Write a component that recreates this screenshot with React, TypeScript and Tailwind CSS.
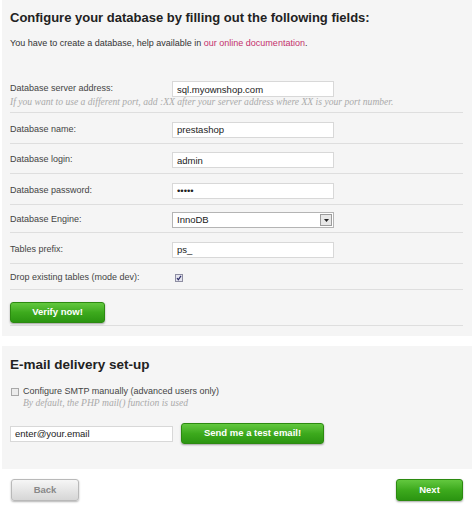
import React from 'react';

const sans = { fontFamily: '"Liberation Sans", Arial, sans-serif' };
const serif = { fontFamily: '"Liberation Serif", Georgia, serif' };

function Row({ label, h, children }: { label: string; h: string; children: React.ReactNode }) {
  return (
    <div className={`flex items-center border-b border-[#dedede] pt-[3px] ${h}`}>
      <label className="w-[162px] text-[9px] text-[#444]">{label}</label>
      {children}
    </div>
  );
}

function TextInput({ value, type = 'text' }: { value: string; type?: string }) {
  return (
    <input
      type={type}
      defaultValue={value}
      className="w-[162px] h-[16px] border border-[#d8d8d8] bg-white px-[4px] text-[9.5px] text-[#222] outline-none"
    />
  );
}

function GreenButton({ children, className }: { children: React.ReactNode; className?: string }) {
  return (
    <button
      className={`h-[21px] rounded-[3px] border border-[#2c8a10] bg-gradient-to-b from-[#62c83e] via-[#3daa1d] to-[#2b9511] text-[9.5px] font-bold text-white shadow-[0_1px_2px_rgba(0,0,0,0.35)] ${className ?? ''}`}
    >
      {children}
    </button>
  );
}

export default function App() {
  return (
    <div className="w-[474px] h-[506px] bg-white text-[#333]" style={sans}>
      <div className="mx-[2px] h-[336px] bg-[#f5f5f5] px-[8px] pt-[10px]">
        <h2 className="text-[13px] font-bold text-[#222] leading-[15px]">
          Configure your database by filling out the following fields:
        </h2>
        <p className="mt-[13px] text-[9px] leading-[11px] text-[#333]">
          You have to create a database, help available in{' '}
          <a className="text-[#c4306c]">our online documentation</a>.
        </p>

        <div className="mt-[32px] w-[453px]">
          <div className="border-b border-[#dedede] pb-[5px]">
            <div className="flex items-center h-[16px]">
              <label className="w-[162px] text-[9px] text-[#444]">Database server address:</label>
              <TextInput value="sql.myownshop.com" />
            </div>
            <p className="text-[9.6px] italic text-[#aaa] leading-[10px]" style={serif}>
              If you want to use a different port, add :XX after your server address where XX is your port number.
            </p>
          </div>
          <Row label="Database name:" h="h-[31px]">
            <TextInput value="prestashop" />
          </Row>
          <Row label="Database login:" h="h-[30px]">
            <TextInput value="admin" />
          </Row>
          <Row label="Database password:" h="h-[31px]">
            <TextInput value="admin" type="password" />
          </Row>
          <Row label="Database Engine:" h="h-[28px]">
            <div className="relative w-[162px] h-[16px] border border-[#b4b4b4] bg-white flex items-center">
              <span className="px-[4px] text-[9.5px] text-[#222]">InnoDB</span>
              <span className="absolute right-[1px] top-[1px] w-[12px] h-[12px] border border-[#9c9c9c] bg-[#e8e8e8] flex items-center justify-center">
                <svg width="5" height="3" viewBox="0 0 5 3"><path d="M0 0h5L2.5 3z" fill="#222" /></svg>
              </span>
            </div>
          </Row>
          <Row label="Tables prefix:" h="h-[31px]">
            <TextInput value="ps_" />
          </Row>
          <Row label="Drop existing tables (mode dev):" h="h-[26px]">
            <span className="ml-[3px] w-[8px] h-[8px] border border-[#8e8ea2] bg-[#e4e4ee] flex items-center justify-center">
              <svg width="6" height="6" viewBox="0 0 6 6"><path d="M1 3l1.3 1.8L5 0.8" stroke="#2a2a66" strokeWidth="1.2" fill="none" /></svg>
            </span>
          </Row>
          <div className="h-[36px] border-b border-[#dedede] pt-[8px]">
            <GreenButton className="w-[95px]">Verify now!</GreenButton>
          </div>
        </div>
      </div>

      <div className="mx-[2px] mt-[10px] h-[123px] bg-[#f5f5f5] px-[8px] pt-[11px]">
        <h2 className="text-[13.5px] font-bold text-[#222] leading-[15px]">E-mail delivery set-up</h2>
        <div className="mt-[14px] flex items-center gap-[4px] h-[11px]">
          <span className="ml-[1px] w-[8px] h-[8px] border border-[#a8a8a8] bg-[#ececec]" />
          <span className="text-[9px] leading-[11px] text-[#444]">Configure SMTP manually (advanced users only)</span>
        </div>
        <p className="mt-[1px] ml-[13px] text-[9.6px] italic text-[#aaa] leading-[10px]" style={serif}>
          By default, the PHP mail() function is used
        </p>
        <div className="mt-[15px] flex items-center gap-[8px]">
          <input
            defaultValue="enter@your.email"
            className="w-[163px] h-[16px] border border-[#d8d8d8] bg-white px-[4px] text-[9.5px] text-[#222] outline-none"
          />
          <GreenButton className="w-[143px]">Send me a test email!</GreenButton>
        </div>
      </div>

      <div className="flex justify-between pl-[11px] pr-[11px] pt-[10px]">
        <button className="w-[68px] h-[22px] rounded-[3px] border border-[#b9b9b9] bg-gradient-to-b from-[#f6f6f6] to-[#d6d6d6] text-[9.5px] font-bold text-[#888] shadow-[0_1px_2px_rgba(0,0,0,0.3)]">
          Back
        </button>
        <GreenButton className="w-[67px] h-[22px]">Next</GreenButton>
      </div>
    </div>
  );
}
